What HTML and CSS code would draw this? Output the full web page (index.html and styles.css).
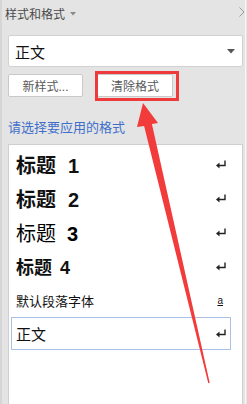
FILE: index.html
```html
<!DOCTYPE html>
<html lang="zh">
<head>
    <meta charset="UTF-8">
    <meta name="viewport" content="width=device-width, initial-scale=1.0">
    <title>样式和格式</title>
    <link rel="stylesheet" href="styles.css">
</head>
<body>
    <div class="panel">
        <div class="header">
            <span class="title">样式和格式</span>
            <svg class="caret" width="6" height="4" viewBox="0 0 6 4"><polygon points="0,0 6,0 3,3.5" fill="#8a8a8a"/></svg>
            <svg class="close" width="6" height="10" viewBox="0 0 6 10"><polyline points="0.5,0.5 5,5 0.5,9.5" fill="none" stroke="#9a9a9a" stroke-width="1"/></svg>
        </div>
        <div class="select">
            <span>正文</span>
            <svg width="8" height="5" viewBox="0 0 8 5"><polygon points="0,0 8,0 4,4.5" fill="#555"/></svg>
        </div>
        <div class="buttons">
            <button class="btn">新样式...</button>
            <button class="btn">清除格式</button>
            <div class="highlight"></div>
        </div>
        <div class="hint">请选择要应用的格式</div>
        <div class="list">
            <div class="row h1"><span>标题<b>1</b></span><svg class="ret" width="10" height="9" viewBox="0 0 10 9"><path d="M9 0.5 V5.5 H2.5" fill="none" stroke="#222" stroke-width="1.4"/><polygon points="0,5.5 3.5,2.5 3.5,8.5" fill="#222"/></svg></div>
            <div class="row h2"><span>标题<b>2</b></span><svg class="ret" width="10" height="9" viewBox="0 0 10 9"><path d="M9 0.5 V5.5 H2.5" fill="none" stroke="#222" stroke-width="1.4"/><polygon points="0,5.5 3.5,2.5 3.5,8.5" fill="#222"/></svg></div>
            <div class="row h3"><span>标题<b>3</b></span><svg class="ret" width="10" height="9" viewBox="0 0 10 9"><path d="M9 0.5 V5.5 H2.5" fill="none" stroke="#222" stroke-width="1.4"/><polygon points="0,5.5 3.5,2.5 3.5,8.5" fill="#222"/></svg></div>
            <div class="row h4"><span>标题<b>4</b></span><svg class="ret" width="10" height="9" viewBox="0 0 10 9"><path d="M9 0.5 V5.5 H2.5" fill="none" stroke="#222" stroke-width="1.4"/><polygon points="0,5.5 3.5,2.5 3.5,8.5" fill="#222"/></svg></div>
            <div class="row normal"><span>默认段落字体</span><span class="char">a</span></div>
            <div class="row body selected"><span>正文</span><svg class="ret" width="10" height="9" viewBox="0 0 10 9"><path d="M9 0.5 V5.5 H2.5" fill="none" stroke="#222" stroke-width="1.4"/><polygon points="0,5.5 3.5,2.5 3.5,8.5" fill="#222"/></svg></div>
        </div>
    </div>
    <svg class="arrow" width="247" height="404" viewBox="0 0 247 404">
        <polygon points="143,103 158,123 151.9,124.1 209.7,382.8 208.3,383.2 144.1,125.9 137,127" fill="#f23b3b"/>
    </svg>
</body>
</html>
```

FILE: styles.css
```css
body {
    margin: 0;
    padding: 0;
    width: 247px;
    height: 404px;
    overflow: hidden;
    background-color: #e4e4e4;
    font-family: "Liberation Sans", "Noto Sans CJK SC", sans-serif;
    position: relative;
}
.panel {
    width: 235px;
    height: 404px;
    padding: 0 2px 0 6px;
    border-left: 2px solid #d6d6d6;
    border-right: 1px solid #f7f7f7;
    background-color: #e4e4e4;
    overflow: hidden;
}
.header {
    height: 26px;
    display: flex;
    align-items: center;
    margin-left: -3px;
}
.title {
    font-size: 12px;
    color: #4a4a4a;
}
.caret {
    margin-left: 5px;
    margin-top: 1px;
}
.close {
    margin-left: auto;
    margin-right: -2px;
    margin-top: -2px;
}
.select {
    margin-top: 9px;
    height: 30px;
    display: flex;
    align-items: center;
    justify-content: space-between;
    padding: 0 7px 0 6px;
    background-color: #fff;
    border: 1px solid #d2d2d2;
    border-radius: 2px;
    font-size: 15px;
    color: #111;
}
.buttons {
    position: relative;
    margin-top: 7px;
    display: flex;
    gap: 14px;
}
.btn {
    height: 23px;
    width: 75px;
    padding: 0;
    background-color: #fff;
    border: 1px solid #c9c9c9;
    border-radius: 2px;
    font-family: "Liberation Sans", "Noto Sans CJK SC", sans-serif;
    font-size: 12px;
    color: #595959;
}
.btn + .btn {
    width: 76px;
}
.highlight {
    position: absolute;
    left: 87px;
    top: -3px;
    width: 78px;
    height: 24px;
    border: 3px solid #ee3a3a;
}
.hint {
    margin-top: 21px;
    line-height: 19px;
    font-size: 13px;
    color: #3f6fcb;
}
.list {
    margin-top: 7px;
    height: 300px;
    padding: 2px 11px 0 2px;
    background-color: #fff;
    border: 1px solid #cfcfcf;
}
.row {
    box-sizing: border-box;
    height: 34px;
    display: flex;
    align-items: center;
    justify-content: space-between;
    padding: 0 4px 0 4px;
    border: 1px solid transparent;
    color: #111;
}
.row b {
    margin-left: 12px;
}
.h1, .h2 {
    font-size: 20px;
    font-weight: bold;
}
.h3 {
    font-size: 20px;
    font-weight: normal;
    color: #000;
}
.h3 b {
    margin-left: 11px;
}
.h4 {
    font-size: 18px;
    font-weight: bold;
}
.h4 b {
    margin-left: 8px;
}
.normal {
    font-size: 13px;
}
.char {
    font-size: 10px;
    text-decoration: underline;
    margin-right: 3px;
}
.body {
    font-size: 15px;
}
.selected {
    height: 33px;
    border-color: #a9c1e2;
}
.arrow {
    position: absolute;
    left: 0;
    top: 0;
    pointer-events: none;
}
```
